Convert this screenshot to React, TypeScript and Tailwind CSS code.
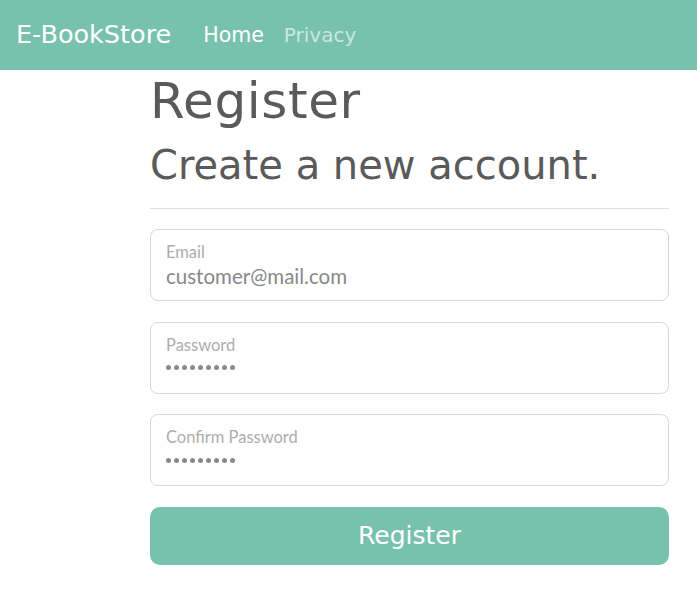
import React from "react";

const head = { fontFamily: '"DejaVu Sans", "Open Sans", sans-serif' };
const body = { fontFamily: 'Lato, "Open Sans", sans-serif' };

function Dots() {
  return (
    <div className="flex gap-[3px] h-[5px] items-center">
      {Array.from({ length: 9 }).map((_, i) => (
        <span key={i} className="block w-[5px] h-[5px] rounded-full bg-[#8a8a8a]" />
      ))}
    </div>
  );
}

function Field({ label, children, dotTop }: { label: string; children: React.ReactNode; dotTop?: boolean }) {
  return (
    <div className="h-[72px] border border-[#d4d8dc] rounded-[8px] px-[15px] pt-[14px] bg-white" style={body}>
      <div className="text-[16.5px] leading-none text-[#adadad]">{label}</div>
      <div className={dotTop ? "mt-[12px]" : "mt-[5px]"}>{children}</div>
    </div>
  );
}

export default function App() {
  return (
    <div className="w-[697px] h-[592px] bg-white overflow-hidden">
      <nav className="h-[70px] bg-[#78c2ad] flex items-center px-[16px]" style={head}>
        <span className="text-[25.5px] text-white leading-none">E-BookStore</span>
        <span className="ml-[32px] text-[20.5px] text-white leading-none">Home</span>
        <span className="ml-[20px] text-[20px] text-[#c9e8df] leading-none">Privacy</span>
      </nav>
      <main className="pl-[150px] w-[669px]">
        <h1 className="mt-[6px] text-[50px] leading-none tracking-[0.6px] text-[#5a5a5a]" style={head}>Register</h1>
        <h2 className="mt-[19px] text-[40px] leading-none text-[#5a5a5a]" style={head}>Create a new account.</h2>
        <div className="mt-[23px] h-px bg-[#dedede]" />
        <div className="mt-[20px] flex flex-col gap-[20.5px]">
          <Field label="Email">
            <div className="text-[20.5px] leading-none text-[#888888]">customer@mail.com</div>
          </Field>
          <Field label="Password" dotTop>
            <Dots />
          </Field>
          <Field label="Confirm Password" dotTop>
            <Dots />
          </Field>
          <button className="h-[58px] rounded-[10px] bg-[#78c2ad] text-white text-[25px] leading-none" style={head}>
            Register
          </button>
        </div>
      </main>
    </div>
  );
}
